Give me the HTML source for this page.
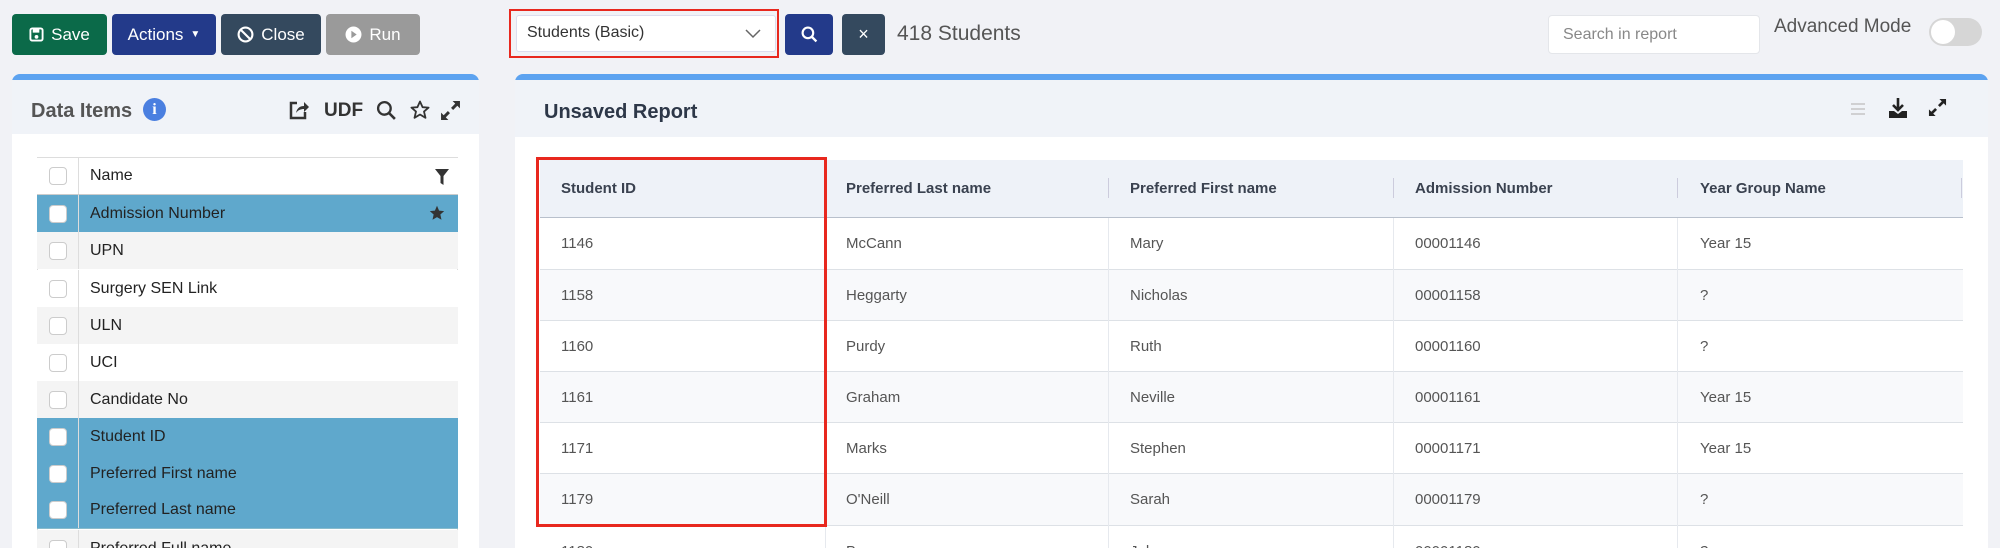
<!DOCTYPE html>
<html style="width:2000px;height:548px;overflow:hidden"><head><meta charset="utf-8"><style>
*{box-sizing:border-box;margin:0;padding:0}
body{width:2000px;height:548px;overflow:hidden;background:#f1f2f6;font-family:"Liberation Sans",sans-serif;position:relative;color:#333}
#wrap{position:absolute;left:0;top:0;width:2000px;height:548px;overflow:hidden}
.abs{position:absolute}
.btn{position:absolute;top:14px;height:41px;border-radius:4px;color:#fff;font-size:17px;display:flex;align-items:center;justify-content:center;gap:7px}
.panel{position:absolute;top:74px;background:#fff;border-top:6px solid #5da3f0;border-radius:8px 8px 0 0;height:474px}
.ph{position:absolute;left:0;right:0;top:0;height:54px;background:#f0f3f8}
.lrow{position:absolute;left:37px;width:421px;height:37px;font-size:16px;color:#222;display:flex;align-items:center}
.lrow .cb{width:42px;height:100%;border-right:1px solid #ddd;display:flex;align-items:center;justify-content:center}
.lrow .cb i{display:block;width:18px;height:18px;border:1px solid #ccc;border-radius:4px;background:#fff}
.lrow span{padding-left:11px}
.sel{background:#5fa8cc}
.g{background:#f4f4f4}.w{background:#fff}
.trow{position:absolute;left:540px;width:1423px;height:51px;border-bottom:1px solid #dde1e6;font-size:15px;color:#555}
.trow div{position:absolute;top:0;height:100%;display:flex;align-items:center}
.th{font-weight:bold;color:#3a4250;font-size:15px}
</style></head><body><div id="wrap">
<div class="btn" style="left:12px;width:95px;background:#0b6a49"><svg width="15" height="15" viewBox="0 0 16 16"><rect x="1.5" y="1.5" width="13" height="13" rx="2" fill="none" stroke="#fff" stroke-width="2"/><rect x="4" y="2" width="7" height="4" fill="#fff"/><circle cx="8" cy="10.5" r="2" fill="#fff"/></svg>Save</div>
<div class="btn" style="left:112px;width:104px;background:#233a8a">Actions <span style="font-size:10px">▼</span></div>
<div class="btn" style="left:221px;width:100px;background:#34495e"><svg width="17" height="17" viewBox="0 0 16 16"><circle cx="8" cy="8" r="6.5" fill="none" stroke="#fff" stroke-width="2"/><path d="M3.5 3.5L12.5 12.5" stroke="#fff" stroke-width="2"/></svg>Close</div>
<div class="btn" style="left:326px;width:94px;background:#9a9a9a"><svg width="17" height="17" viewBox="0 0 16 16"><circle cx="8" cy="8" r="7.5" fill="#fff"/><path d="M6 4.5L11 8L6 11.5Z" fill="#9a9a9a"/></svg>Run</div>
<div class="abs" style="left:509px;top:9px;width:270px;height:49px;border:2px solid #e8281e"></div>
<div class="abs" style="left:516px;top:15px;width:260px;height:37px;background:#fff;border:1px solid #dde;border-radius:3px;font-size:16px;color:#333;padding:8px 10px">Students (Basic)<svg class="abs" style="left:228px;top:13px" width="16" height="10" viewBox="0 0 16 10"><path d="M1 1L8 8L15 1" fill="none" stroke="#666" stroke-width="1.5"/></svg></div>
<div class="btn" style="left:785px;width:48px;background:#233a8a"><svg width="17" height="17" viewBox="0 0 16 16"><circle cx="6.5" cy="6.5" r="5" fill="none" stroke="#fff" stroke-width="2"/><path d="M10 10L14.5 14.5" stroke="#fff" stroke-width="2.2"/></svg></div>
<div class="btn" style="left:842px;width:43px;background:#34495e;font-size:18px">×</div>
<div class="abs" style="left:897px;top:22px;font-size:21px;color:#555">418 Students</div>
<div class="abs" style="left:1548px;top:15px;width:212px;height:39px;background:#fff;border:1px solid #e4e6ea;border-radius:4px;font-size:16px;color:#888;padding:10px 14px">Search in report</div>
<div class="abs" style="left:1774px;top:16px;font-size:19px;color:#555">Advanced Mode</div>
<div class="abs" style="left:1929px;top:18px;width:53px;height:28px;background:#d6d6d6;border-radius:14px"><div class="abs" style="left:2px;top:2px;width:24px;height:24px;border-radius:12px;background:#fff"></div></div>

<div class="panel" style="left:12px;width:467px">
<div class="ph"></div>
<div class="abs" style="left:19px;top:20px;font-size:20px;color:#555;font-weight:bold">Data Items</div>
<div class="abs" style="left:131px;top:18px;width:23px;height:23px;border-radius:50%;background:#4a7fe0;color:#fff;font-weight:bold;font-size:16px;text-align:center;line-height:23px;font-family:'Liberation Serif',serif">i</div>
<svg class="abs" style="left:276px;top:20px" width="22" height="20" viewBox="0 0 22 20"><path d="M9 3H3V18H17V12" fill="none" stroke="#333" stroke-width="2.5"/><path d="M8 13C9 8 12 6 16 6V2L21 7L16 12V9C13 9 10 10 8 13Z" fill="#333"/></svg>
<div class="abs" style="left:312px;top:20px;font-size:19px;font-weight:bold;color:#333">UDF</div>
<svg class="abs" style="left:364px;top:20px" width="21" height="21" viewBox="0 0 20 20"><circle cx="8" cy="8" r="6" fill="none" stroke="#333" stroke-width="2.2"/><path d="M12.5 12.5L18 18" stroke="#333" stroke-width="2.5"/></svg>
<svg class="abs" style="left:398px;top:20px" width="20" height="20" viewBox="0 0 20 20"><path d="M10 1.5L12.6 7.2L18.6 7.6L14 11.6L15.5 17.8L10 14.5L4.5 17.8L6 11.6L1.4 7.6L7.4 7.2Z" fill="none" stroke="#333" stroke-width="1.8" stroke-linejoin="round"/></svg>
<svg class="abs" style="left:428px;top:20px" width="21" height="21" viewBox="0 0 20 20"><path d="M12 1H19V8L16.5 5.5L12.5 9.5L10.5 7.5L14.5 3.5ZM8 19H1V12L3.5 14.5L7.5 10.5L9.5 12.5L5.5 16.5Z" fill="#333"/></svg>
</div>
<div class="abs" style="left:37px;top:157px;width:421px;height:400px;border:1px solid #ddd;border-bottom:none"></div>
<div class="lrow w" style="top:158px;border-bottom:1px solid #ccc"><div class="cb"><i></i></div><span>Name</span><svg class="abs" style="left:398px;top:11px" width="14" height="16" viewBox="0 0 14 16"><path d="M0 0H14L8.5 7V16L5.5 14V7Z" fill="#333"/></svg></div>
<div class="lrow sel" style="top:195px"><div class="cb"><i></i></div><span>Admission Number</span><svg class="abs" style="left:392px;top:10px" width="16" height="16" viewBox="0 0 20 20"><path d="M10 1L12.6 7L19 7.6L14.2 11.9L15.6 18.5L10 15.1L4.4 18.5L5.8 11.9L1 7.6L7.4 7Z" fill="#333"/></svg></div>
<div class="lrow g" style="top:232px"><div class="cb"><i></i></div><span>UPN</span></div>
<div class="lrow w" style="top:270px"><div class="cb"><i></i></div><span>Surgery SEN Link</span></div>
<div class="lrow g" style="top:307px"><div class="cb"><i></i></div><span>ULN</span></div>
<div class="lrow w" style="top:344px"><div class="cb"><i></i></div><span>UCI</span></div>
<div class="lrow g" style="top:381px"><div class="cb"><i></i></div><span>Candidate No</span></div>
<div class="lrow sel" style="top:418px"><div class="cb"><i></i></div><span>Student ID</span></div>
<div class="lrow sel" style="top:455px"><div class="cb"><i></i></div><span>Preferred First name</span></div>
<div class="lrow sel" style="top:492px;border-bottom:1px solid #8bc"><div class="cb"><i></i></div><span>Preferred Last name</span></div>
<div class="lrow g" style="top:530px"><div class="cb"><i></i></div><span>Preferred Full name</span></div>

<div class="panel" style="left:515px;width:1473px">
<div class="ph" style="height:57px"></div>
<div class="abs" style="left:29px;top:21px;font-size:20px;color:#2d3748;font-weight:bold">Unsaved Report</div>
<svg class="abs" style="left:1335px;top:21px" width="16" height="16" viewBox="0 0 16 16"><path d="M1 3H15M1 8H15M1 13H15" stroke="#ccc" stroke-width="1.8"/></svg>
<svg class="abs" style="left:1373px;top:17px" width="20" height="22" viewBox="0 0 20 22"><path d="M10 1V12M5 8L10 13L15 8" fill="none" stroke="#222" stroke-width="2.6"/><path d="M1 14H6L10 17L14 14H19V21H1Z" fill="#222"/></svg>
<svg class="abs" style="left:1413px;top:18px" width="19" height="19" viewBox="0 0 20 20"><path d="M12 1H19V8L16.5 5.5L12.5 9.5L10.5 7.5L14.5 3.5ZM8 19H1V12L3.5 14.5L7.5 10.5L9.5 12.5L5.5 16.5Z" fill="#222"/></svg>
</div>
<div class="abs" style="left:540px;top:160px;width:1423px;height:400px;border:1px solid #d5dbe3"></div>
<div class="trow th" style="top:160px;height:58px;background:#eef2f8;border-bottom:1px solid #b8c0cc"><div style="left:21px">Student ID</div><div style="left:306px">Preferred Last name</div><div style="left:590px">Preferred First name</div><div style="left:875px">Admission Number</div><div style="left:1160px">Year Group Name</div>
<i class="abs" style="left:568px;top:18px;width:1px;height:20px;background:#ccd"></i><i class="abs" style="left:853px;top:18px;width:1px;height:20px;background:#ccd"></i><i class="abs" style="left:1137px;top:18px;width:1px;height:20px;background:#ccd"></i><i class="abs" style="left:1421px;top:18px;width:1px;height:20px;background:#ccd"></i></div>
<div class="trow" style="top:218px;height:52px;background:#fff"><div style="left:21px">1146</div><div style="left:306px">McCann</div><div style="left:590px">Mary</div><div style="left:875px">00001146</div><div style="left:1160px">Year 15</div></div>
<div class="trow" style="top:270px;background:#f8f9fb"><div style="left:21px">1158</div><div style="left:306px">Heggarty</div><div style="left:590px">Nicholas</div><div style="left:875px">00001158</div><div style="left:1160px">?</div></div>
<div class="trow" style="top:321px;background:#fff"><div style="left:21px">1160</div><div style="left:306px">Purdy</div><div style="left:590px">Ruth</div><div style="left:875px">00001160</div><div style="left:1160px">?</div></div>
<div class="trow" style="top:372px;background:#f8f9fb"><div style="left:21px">1161</div><div style="left:306px">Graham</div><div style="left:590px">Neville</div><div style="left:875px">00001161</div><div style="left:1160px">Year 15</div></div>
<div class="trow" style="top:423px;background:#fff"><div style="left:21px">1171</div><div style="left:306px">Marks</div><div style="left:590px">Stephen</div><div style="left:875px">00001171</div><div style="left:1160px">Year 15</div></div>
<div class="trow" style="top:474px;height:52px;background:#f8f9fb"><div style="left:21px">1179</div><div style="left:306px">O'Neill</div><div style="left:590px">Sarah</div><div style="left:875px">00001179</div><div style="left:1160px">?</div></div>
<div class="trow" style="top:526px;background:#fff"><div style="left:21px">1180</div><div style="left:306px">Bracey</div><div style="left:590px">John</div><div style="left:875px">00001180</div><div style="left:1160px">?</div></div>
<i class="abs" style="left:825px;top:218px;width:1px;height:330px;background:#e6e9ee"></i>
<i class="abs" style="left:1108px;top:218px;width:1px;height:330px;background:#e6e9ee"></i>
<i class="abs" style="left:1393px;top:218px;width:1px;height:330px;background:#e6e9ee"></i>
<i class="abs" style="left:1677px;top:218px;width:1px;height:330px;background:#e6e9ee"></i>
<div class="abs" style="left:536px;top:157px;width:291px;height:370px;border:3px solid #e8281e"></div>
</div></body></html>
